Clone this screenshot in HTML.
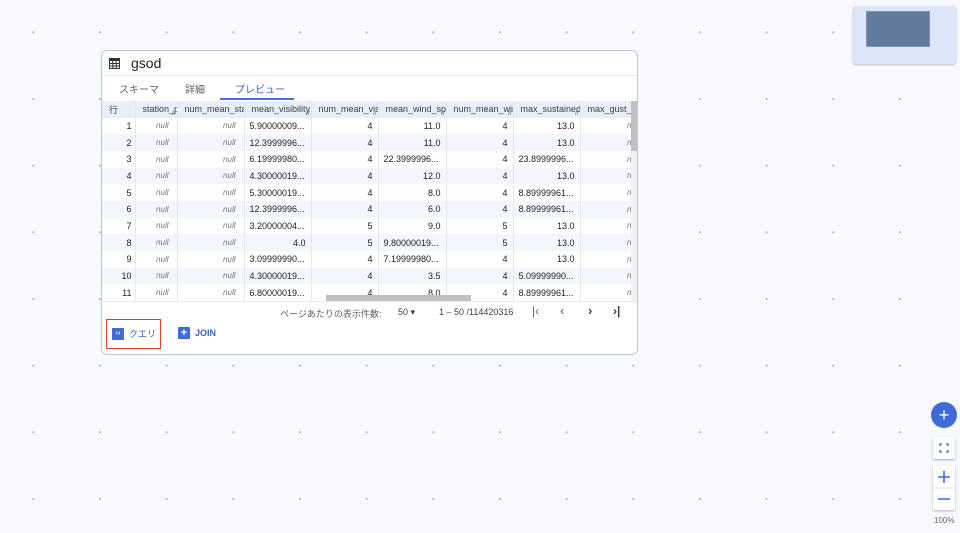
<!DOCTYPE html>
<html><head><meta charset="utf-8"><style>
*{box-sizing:border-box;margin:0;padding:0}
body{width:960px;height:533px;overflow:hidden;background:#f7f9fd;font-family:"Liberation Sans","Noto Sans CJK JP",sans-serif;position:relative;
background-image:radial-gradient(circle,#b8bcc4 0.9px,transparent 1.3px);background-size:66.67px 66.67px;background-position:0px -1px}
.card{position:absolute;left:101px;top:50px;width:537px;height:305px;background:#fff;border:1px solid #b9c6e4;border-radius:6px;overflow:hidden}
.hd{height:25px;border-bottom:1px solid #e6e8ec;display:flex;align-items:center;padding-left:7px}
.hd span{font-size:14px;color:#1f1f1f;margin-left:11px}
.tabs{height:25px;display:flex;font-size:10px;color:#5f6368;position:relative}
.tabs div{position:absolute;top:5px}
.ul{position:absolute;left:118px;top:22px;width:74px;height:2px;background:#4a72d6}
.tw{position:absolute;left:0;top:50px;width:529px;height:200px;overflow:hidden}
table{border-collapse:collapse;table-layout:fixed;width:538px;font-size:9px;color:#202124}
td,th{height:16.67px;white-space:nowrap;overflow:hidden;border-right:1px solid #e6e8ee;padding:0 5px;text-align:right}
th{background:#e9effa;font-weight:normal;color:#3c4043;text-align:left;padding:0 7px;position:relative}
th i{position:absolute;right:1px;bottom:1px;font-size:6px;color:#555;font-style:normal}
tr.o td{background:#f3f7fd}
td.n{color:#777;font-style:italic;font-size:8px;padding-right:8px}
td.l{text-align:left}
td.r{padding-right:3px}
.vs{position:absolute;left:529px;top:50px;width:7px;height:200px;background:#f1f1f1}
.vs b{position:absolute;left:0;top:0;width:7px;height:50px;background:#c1c1c1}
.hs{position:absolute;left:224px;top:244px;width:145px;height:6px;background:#c1c1c1}
.ft{position:absolute;left:0;top:250px;width:536px;border-top:1px solid #e6e8ec;height:1px}
.pg{position:absolute;top:256px;font-size:9px;color:#3c4043}
.btn{position:absolute;top:276px;font-size:9px;color:#3b63c9;display:flex;align-items:center}
.bi{width:12px;height:12px;background:#3f6ad8;border-radius:1px;color:#fff;font-size:11px;line-height:12px;text-align:center;margin-right:5px;font-weight:bold}
</style></head><body>
<div style="position:absolute;left:853px;top:6px;width:103px;height:58px;background:#dde5f8;border-radius:3px;box-shadow:0 1px 2px rgba(0,0,0,.25)">
<div style="position:absolute;left:13px;top:5px;width:64px;height:36px;background:#627b9c;border:1px solid #7f94b5"></div></div>

<div class="card">
<div class="hd"><svg width="11" height="11" viewBox="0 0 11 11"><rect x="0.5" y="0.5" width="10" height="10" fill="none" stroke="#333"/><rect x="0.5" y="0.5" width="10" height="2.5" fill="#333"/><path d="M0 5.5h11M0 8h11M3.8 3v8M7.2 3v8" stroke="#333" stroke-width="1"/></svg><span>gsod</span></div>
<div class="tabs"><div style="left:17px">スキーマ</div><div style="left:83px">詳細</div><div style="left:133px;color:#3b63c9">プレビュー</div><span class="ul"></span></div>
<div class="tw"><table>
<colgroup><col style="width:33px"><col style="width:42px"><col style="width:67px"><col style="width:67px"><col style="width:67px"><col style="width:68px"><col style="width:67px"><col style="width:67px"><col style="width:60px"></colgroup>
<tr><th style="padding-left:7px">行</th><th>station_pa<i>//</i></th><th>num_mean_stati</th><th>mean_visibility<i>//</i></th><th>num_mean_visib<i>//</i></th><th>mean_wind_spe<i>//</i></th><th>num_mean_wind<i>//</i></th><th>max_sustained_<i>//</i></th><th>max_gust_w</th></tr>
<tr><td class="r">1</td><td class="n">null</td><td class="n">null</td><td class="l">5.90000009...</td><td>4</td><td>11.0</td><td>4</td><td>13.0</td><td class="n">n</td></tr>
<tr class="o"><td class="r">2</td><td class="n">null</td><td class="n">null</td><td class="l">12.3999996...</td><td>4</td><td>11.0</td><td>4</td><td>13.0</td><td class="n">n</td></tr>
<tr><td class="r">3</td><td class="n">null</td><td class="n">null</td><td class="l">6.19999980...</td><td>4</td><td class="l">22.3999996...</td><td>4</td><td class="l">23.8999996...</td><td class="n">n</td></tr>
<tr class="o"><td class="r">4</td><td class="n">null</td><td class="n">null</td><td class="l">4.30000019...</td><td>4</td><td>12.0</td><td>4</td><td>13.0</td><td class="n">n</td></tr>
<tr><td class="r">5</td><td class="n">null</td><td class="n">null</td><td class="l">5.30000019...</td><td>4</td><td>8.0</td><td>4</td><td class="l">8.89999961...</td><td class="n">n</td></tr>
<tr class="o"><td class="r">6</td><td class="n">null</td><td class="n">null</td><td class="l">12.3999996...</td><td>4</td><td>6.0</td><td>4</td><td class="l">8.89999961...</td><td class="n">n</td></tr>
<tr><td class="r">7</td><td class="n">null</td><td class="n">null</td><td class="l">3.20000004...</td><td>5</td><td>9.0</td><td>5</td><td>13.0</td><td class="n">n</td></tr>
<tr class="o"><td class="r">8</td><td class="n">null</td><td class="n">null</td><td>4.0</td><td>5</td><td class="l">9.80000019...</td><td>5</td><td>13.0</td><td class="n">n</td></tr>
<tr><td class="r">9</td><td class="n">null</td><td class="n">null</td><td class="l">3.09999990...</td><td>4</td><td class="l">7.19999980...</td><td>4</td><td>13.0</td><td class="n">n</td></tr>
<tr class="o"><td class="r">10</td><td class="n">null</td><td class="n">null</td><td class="l">4.30000019...</td><td>4</td><td>3.5</td><td>4</td><td class="l">5.09999990...</td><td class="n">n</td></tr>
<tr><td class="r">11</td><td class="n">null</td><td class="n">null</td><td class="l">6.80000019...</td><td>4</td><td>8.0</td><td>4</td><td class="l">8.89999961...</td><td class="n">n</td></tr>
</table></div>
<div class="vs"><b></b></div>
<div class="hs"></div>
<div class="ft"></div>
<div class="pg" style="left:178px;color:#5f6368">ページあたりの表示件数:</div>
<div class="pg" style="left:296px">50 ▾</div>
<div class="pg" style="left:337px">1 – 50 /114420316</div>
<div class="pg" style="left:430px;font-size:12px;top:253px;color:#666">|‹</div>
<div class="pg" style="left:458px;font-size:13px;top:252px;color:#666">‹</div>
<div class="pg" style="left:486px;font-size:13px;top:252px;font-weight:bold">›</div>
<div class="pg" style="left:511px;font-size:12px;top:253px;font-weight:bold">›|</div>
<div style="position:absolute;left:4px;top:268px;width:55px;height:30px;border:1.5px solid #e0442f"></div>
<div class="btn" style="left:10px"><span class="bi" style="font-size:7px">‹›</span>クエリ</div>
<div class="btn" style="left:76px;font-weight:bold"><span class="bi">+</span>JOIN</div>
</div>

<div style="position:absolute;left:931px;top:402px;width:26px;height:26px;border-radius:50%;background:#3f6ad8;color:#fff;font-size:18px;line-height:26px;text-align:center">+</div>
<div style="position:absolute;left:933px;top:437px;width:22px;height:22px;background:#fff;box-shadow:0 1px 2px rgba(0,0,0,.3);border-radius:2px">
<svg width="22" height="22" viewBox="0 0 22 22"><path d="M7 9V7h2M13 7h2v2M15 13v2h-2M9 15H7v-2" fill="none" stroke="#3f6ad8" stroke-width="1.3"/></svg></div>
<div style="position:absolute;left:933px;top:466px;width:22px;height:44px;background:#fff;box-shadow:0 1px 2px rgba(0,0,0,.3);border-radius:2px">
<svg width="22" height="44" viewBox="0 0 22 44"><path d="M11 5v12M5 11h12M5 33h12" stroke="#3f6ad8" stroke-width="1.6"/><path d="M0 22h22" stroke="#e0e0e0"/></svg></div>
<div style="position:absolute;left:934px;top:516px;font-size:8px;color:#666">100%</div>
</body></html>
